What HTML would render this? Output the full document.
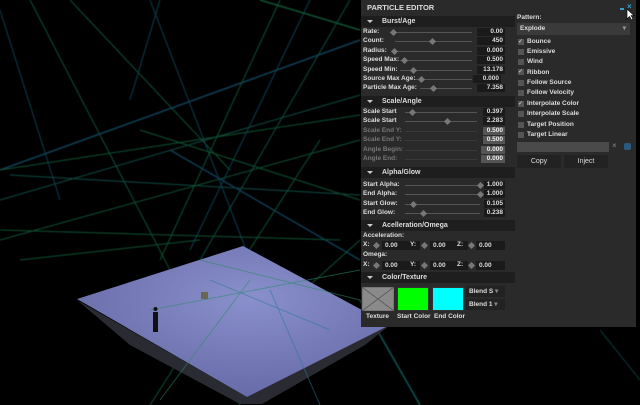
<!DOCTYPE html>
<html><head><meta charset="utf-8"><style>
*{margin:0;padding:0;box-sizing:border-box}
body{width:640px;height:405px;background:#000;position:relative;overflow:hidden;font-family:"Liberation Sans",sans-serif;font-size:7px;color:#ddd}
.a{position:absolute;white-space:nowrap}
.p{position:absolute;left:361px;top:0;width:275px;height:327px;background:#2a2a2a}
.h{position:absolute;left:361px;width:154px;height:11px;background:#1e1e1e;color:#ddd;font-weight:bold;font-size:7px;line-height:11px;padding-left:21px}
.h:before{content:"";position:absolute;left:6px;top:4px;border-left:3px solid transparent;border-right:3px solid transparent;border-top:3px solid #ccc}
.l{position:absolute;left:363px;font-size:6.5px;font-weight:bold;color:#ddd;line-height:8px}
.t{position:absolute;height:1px;background:#555}
.k{position:absolute;width:5px;height:5px;background:#777;transform:rotate(45deg)}
.v{position:absolute;left:477px;width:28px;height:8px;background:#1a1a1a;color:#ddd;font-size:6.5px;text-align:right;padding-right:2px;line-height:8px;font-weight:bold}
.dis{color:#777}.dv{background:#555;color:#eee}
.cb{position:absolute;left:518px;width:6px;height:6px;background:#555}
.cl{position:absolute;left:527px;font-size:6.5px;font-weight:bold;line-height:8px;color:#ddd}
.n{position:absolute;width:38px;height:9px;background:#1a1a1a;font-size:6.5px;font-weight:bold;line-height:9px;padding-left:3px}
.btn{position:absolute;height:13px;background:#222;text-align:center;line-height:13px;font-size:7px;color:#ddd}
</style></head><body>
<svg class="a" style="left:0;top:0" width="640" height="405">
<defs><filter id="b"><feGaussianBlur stdDeviation="0.5"/></filter>
<radialGradient id="g" cx="0.55" cy="0.35" r="0.7"><stop offset="0" stop-color="#8a90cc"/><stop offset="1" stop-color="#6468a4"/></radialGradient></defs>
<g stroke-width="1" fill="none" filter="url(#b)" opacity="0.6">
<line x1="30" y1="0" x2="240" y2="405" stroke="#1a8a55"/>
<line x1="70" y1="0" x2="230" y2="170" stroke="#1a8a55"/>
<line x1="0" y1="170" x2="360" y2="40" stroke="#1a6a90" stroke-width="1.6"/>
<line x1="0" y1="200" x2="360" y2="95" stroke="#1a8070"/>
<line x1="0" y1="170" x2="360" y2="115" stroke="#1a8a55"/>
<line x1="0" y1="240" x2="360" y2="140" stroke="#1a8a55"/>
<line x1="10" y1="175" x2="360" y2="195" stroke="#1a8070"/>
<line x1="150" y1="0" x2="250" y2="260" stroke="#186a8a"/>
<line x1="160" y1="0" x2="130" y2="100" stroke="#186a8a"/>
<line x1="280" y1="0" x2="160" y2="260" stroke="#1a8a55"/>
<line x1="310" y1="0" x2="190" y2="250" stroke="#186a8a"/>
<line x1="350" y1="0" x2="200" y2="260" stroke="#1a8070"/>
<line x1="140" y1="130" x2="360" y2="200" stroke="#1a8a55"/>
<line x1="170" y1="150" x2="360" y2="260" stroke="#1a6a90" stroke-width="1.4"/>
<line x1="0" y1="230" x2="340" y2="240" stroke="#1a8a55"/>
<line x1="320" y1="140" x2="150" y2="405" stroke="#1a8a55"/>
<line x1="0" y1="10" x2="60" y2="200" stroke="#186a8a"/>
<line x1="260" y1="0" x2="360" y2="30" stroke="#1a8a55" stroke-width="1.6"/>
<line x1="260" y1="330" x2="360" y2="240" stroke="#1a8a55"/>
<line x1="360" y1="300" x2="420" y2="405" stroke="#1a8a8a" stroke-width="1.6"/>
<line x1="600" y1="330" x2="640" y2="380" stroke="#1a6a70"/>
<line x1="20" y1="260" x2="200" y2="240" stroke="#1a8a55"/>
</g>
<polygon points="77,300 130,345 240,404 262,404 365,345 390,325 247,397" fill="#2a2a32"/>
<polygon points="77,299 243,246 390,325 247,397" fill="url(#g)"/>
<g stroke-width="1" fill="none" opacity="0.55">
<line x1="150" y1="310" x2="360" y2="270" stroke="#2a8a70"/>
<line x1="200" y1="260" x2="360" y2="300" stroke="#2a8a60"/>
<line x1="210" y1="280" x2="330" y2="330" stroke="#2a7a90"/>
<line x1="250" y1="280" x2="160" y2="400" stroke="#2a8a60"/>
<line x1="270" y1="290" x2="320" y2="405" stroke="#2a7a90"/>
</g>
<rect x="201" y="292" width="7" height="7" fill="#6a6650"/>
<rect x="153" y="312" width="5" height="7" fill="#111"/>
<circle cx="155.5" cy="309" r="2" fill="#111"/>
<rect x="153" y="318" width="5" height="14" fill="#111"/>
</svg>

<div class="p"></div>
<div class="a" style="left:367px;top:3px;font-size:7.5px;font-weight:bold;color:#ddd">PARTICLE EDITOR</div>
<div class="a" style="left:620px;top:8px;width:4px;height:1.5px;background:#3a9ad0"></div>
<div class="a" style="left:627px;top:2px;font-size:8px;font-weight:bold;color:#3a9ad0">×</div>
<svg class="a" style="left:626px;top:8px" width="9" height="13"><path d="M1 1 L1 11 L3.5 8.5 L5.5 12 L7 11 L5 7.5 L8 7.5 Z" fill="#fff" stroke="#000" stroke-width="0.6"/></svg>

<div class="h" style="top:16px">Burst/Age</div>
<div class="h" style="top:96px">Scale/Angle</div>
<div class="h" style="top:167px">Alpha/Glow</div>
<div class="h" style="top:220px">Acelleration/Omega</div>
<div class="h" style="top:272px">Color/Texture</div>

<div class="l" style="top:28px">Rate:</div><div class="t" style="left:392px;width:80px;top:32px"></div><div class="k" style="left:391px;top:30px"></div><div class="v" style="top:28px">0.00</div>
<div class="l" style="top:37px">Count:</div><div class="t" style="left:395px;width:77px;top:41px"></div><div class="k" style="left:430px;top:39px"></div><div class="v" style="top:37px">450</div>
<div class="l" style="top:47px">Radius:</div><div class="t" style="left:395px;width:77px;top:51px"></div><div class="k" style="left:392px;top:49px"></div><div class="v" style="top:47px">0.000</div>
<div class="l" style="top:56px">Speed Max:</div><div class="t" style="left:400px;width:72px;top:60px"></div><div class="k" style="left:402px;top:58px"></div><div class="v" style="top:56px">0.500</div>
<div class="l" style="top:66px">Speed Min:</div><div class="t" style="left:400px;width:72px;top:70px"></div><div class="k" style="left:411px;top:68px"></div><div class="v" style="top:66px">13.178</div>
<div class="l" style="top:75px">Source Max Age:</div><div class="t" style="left:415px;width:57px;top:79px"></div><div class="k" style="left:419px;top:77px"></div><div class="v" style="top:75px;left:473px">0.000</div>
<div class="l" style="top:84px">Particle Max Age:</div><div class="t" style="left:420px;width:52px;top:88px"></div><div class="k" style="left:431px;top:86px"></div><div class="v" style="top:84px">7.358</div>

<div class="l" style="top:108px">Scale Start</div><div class="t" style="left:405px;width:72px;top:112px"></div><div class="k" style="left:410px;top:110px"></div><div class="v" style="top:108px;left:483px;width:22px">0.397</div>
<div class="l" style="top:117px">Scale Start</div><div class="t" style="left:405px;width:72px;top:121px"></div><div class="k" style="left:445px;top:119px"></div><div class="v" style="top:117px;left:483px;width:22px">2.283</div>
<div class="l dis" style="top:127px">Scale End Y:</div><div class="t" style="left:405px;width:72px;top:131px;background:#3a3a3a"></div><div class="v dv" style="top:127px;left:483px;width:22px">0.500</div>
<div class="l dis" style="top:136px">Scale End Y:</div><div class="t" style="left:405px;width:72px;top:140px;background:#3a3a3a"></div><div class="v dv" style="top:136px;left:483px;width:22px">0.500</div>
<div class="l dis" style="top:146px">Angle Begin:</div><div class="t" style="left:405px;width:72px;top:150px;background:#3a3a3a"></div><div class="v dv" style="top:146px;left:481px;width:24px">0.000</div>
<div class="l dis" style="top:155px">Angle End:</div><div class="t" style="left:405px;width:72px;top:159px;background:#3a3a3a"></div><div class="v dv" style="top:155px;left:481px;width:24px">0.000</div>

<div class="l" style="top:181px">Start Alpha:</div><div class="t" style="left:405px;width:75px;top:185px"></div><div class="k" style="left:478px;top:183px"></div><div class="v" style="top:181px;left:484px;width:21px">1.000</div>
<div class="l" style="top:190px">End Alpha:</div><div class="t" style="left:405px;width:75px;top:194px"></div><div class="k" style="left:478px;top:192px"></div><div class="v" style="top:190px;left:484px;width:21px">1.000</div>
<div class="l" style="top:200px">Start Glow:</div><div class="t" style="left:405px;width:75px;top:204px"></div><div class="k" style="left:411px;top:202px"></div><div class="v" style="top:200px;left:484px;width:21px">0.105</div>
<div class="l" style="top:209px">End Glow:</div><div class="t" style="left:405px;width:75px;top:213px"></div><div class="k" style="left:421px;top:211px"></div><div class="v" style="top:209px;left:484px;width:21px">0.238</div>

<div class="l" style="top:232px">Acceleration:</div>
<div class="l" style="top:241px">X:</div><div class="k" style="left:374px;top:243px"></div><div class="n" style="left:382px;top:241px">0.00</div>
<div class="l" style="top:241px;left:410px">Y:</div><div class="k" style="left:422px;top:243px"></div><div class="n" style="left:430px;top:241px">0.00</div>
<div class="l" style="top:241px;left:457px">Z:</div><div class="k" style="left:469px;top:243px"></div><div class="n" style="left:476px;top:241px;width:29px">0.00</div>
<div class="l" style="top:251px">Omega:</div>
<div class="l" style="top:261px">X:</div><div class="k" style="left:374px;top:263px"></div><div class="n" style="left:382px;top:261px">0.00</div>
<div class="l" style="top:261px;left:410px">Y:</div><div class="k" style="left:422px;top:263px"></div><div class="n" style="left:430px;top:261px">0.00</div>
<div class="l" style="top:261px;left:457px">Z:</div><div class="k" style="left:469px;top:263px"></div><div class="n" style="left:476px;top:261px;width:29px">0.00</div>

<svg class="a" style="left:362px;top:287px" width="32" height="24"><rect width="32" height="24" fill="#8a8a8a" stroke="#666"/><path d="M0 0L32 24M32 0L0 24" stroke="#555" stroke-width="0.8"/></svg>
<div class="a" style="left:397px;top:287px;width:32px;height:24px;background:#00ff00;border:1px solid #333"></div>
<div class="a" style="left:432px;top:287px;width:32px;height:24px;background:#00ffff;border:1px solid #333"></div>
<div class="a" style="left:366px;top:313px;font-size:6.5px;font-weight:bold">Texture</div>
<div class="a" style="left:397px;top:313px;font-size:6.5px;font-weight:bold">Start Color</div>
<div class="a" style="left:434px;top:313px;font-size:6.5px;font-weight:bold">End Color</div>
<div class="btn" style="left:466px;top:286px;width:39px;height:11px;line-height:11px;text-align:left;padding-left:3px;font-size:6.5px;font-weight:bold">Blend S <span style="color:#888">▾</span></div>
<div class="btn" style="left:466px;top:299px;width:39px;height:11px;line-height:11px;text-align:left;padding-left:3px;font-size:6.5px;font-weight:bold">Blend 1 <span style="color:#888">▾</span></div>

<div class="a" style="left:517px;top:14px;font-size:6.5px;font-weight:bold">Pattern:</div>
<div class="a" style="left:517px;top:23px;width:113px;height:12px;background:#3a3a3a;font-size:6.5px;font-weight:bold;line-height:12px;padding-left:3px">Explode<span style="position:absolute;right:4px;color:#999">▾</span></div>
<div class="cb" style="top:39px"></div><div class="cl" style="top:38px">Bounce</div>
<div class="cb" style="top:49px"></div><div class="cl" style="top:48px">Emissive</div>
<div class="cb" style="top:59px"></div><div class="cl" style="top:58px">Wind</div>
<div class="cb" style="top:69px"></div><div class="cl" style="top:69px">Ribbon</div>
<div class="cb" style="top:80px"></div><div class="cl" style="top:79px">Follow Source</div>
<div class="cb" style="top:90px"></div><div class="cl" style="top:89px">Follow Velocity</div>
<div class="cb" style="top:101px"></div><div class="cl" style="top:100px">Interpolate Color</div>
<div class="cb" style="top:111px"></div><div class="cl" style="top:110px">Interpolate Scale</div>
<div class="cb" style="top:122px"></div><div class="cl" style="top:121px">Target Position</div>
<div class="cb" style="top:132px"></div><div class="cl" style="top:131px">Target Linear</div>
<div class="a" style="left:518px;top:38px;font-size:6px;color:#ddd">✓</div>
<div class="a" style="left:518px;top:68px;font-size:6px;color:#ddd">✓</div>
<div class="a" style="left:518px;top:100px;font-size:6px;color:#ddd">✓</div>
<div class="a" style="left:517px;top:142px;width:92px;height:10px;background:#4a4a4a"></div>
<div class="a" style="left:612px;top:141px;font-size:8px;color:#888">×</div>
<div class="a" style="left:624px;top:143px;width:7px;height:7px;border-radius:2px;background:#2a5a80"></div>
<div class="btn" style="left:517px;top:155px;width:44px">Copy</div>
<div class="btn" style="left:564px;top:155px;width:44px">Inject</div>
</body></html>
